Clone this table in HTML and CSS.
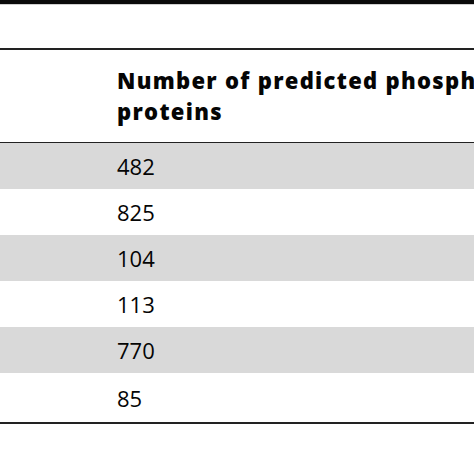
FILE: index.html
```html
<!DOCTYPE html>
<html>
<head>
<meta charset="utf-8">
<link rel="stylesheet" href="styles.css">
</head>
<body>
<div class="page">
  <div class="topbar"></div>
  <div class="caption-gap"></div>
  <div class="table">
    <div class="row head">
      <div class="c1"></div>
      <div class="c2">Number of predicted phosphorylated<br>proteins</div>
    </div>
    <div class="row shade"><div class="c1"></div><div class="c2">482</div></div>
    <div class="row"><div class="c1"></div><div class="c2">825</div></div>
    <div class="row shade"><div class="c1"></div><div class="c2">104</div></div>
    <div class="row"><div class="c1"></div><div class="c2">113</div></div>
    <div class="row shade"><div class="c1"></div><div class="c2">770</div></div>
    <div class="row last"><div class="c1"></div><div class="c2">85</div></div>
  </div>
</div>
</body>
</html>
```

FILE: styles.css
```css
html, body {
  margin: 0;
  padding: 0;
  background: #ffffff;
}
.page {
  width: 474px;
  height: 474px;
  overflow: hidden;
  font-family: "Open Sans", "Liberation Sans", sans-serif;
  color: #050505;
}
.topbar {
  height: 4px;
  background: #0a0a0a;
  border-bottom: 1px solid #d0d0d0;
}
.caption-gap {
  height: 43px;
}
.table {
  border-top: 2px solid #222222;
  border-bottom: 2px solid #222222;
}
.row {
  display: grid;
  grid-template-columns: 117px 700px;
  height: 46px;
  align-items: center;
  font-size: 22px;
}
.row .c2 {
  white-space: nowrap;
}
.row.head {
  height: 92px;
  border-bottom: 1.5px solid #222222;
  font-size: 22px;
  font-weight: 800;
  letter-spacing: 1.3px;
  line-height: 31px;
}
.row.shade {
  background: #d9d9d9;
}
.row.last {
  height: 49px;
}
```
